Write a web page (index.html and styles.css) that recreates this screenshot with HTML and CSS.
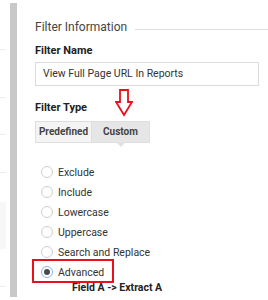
FILE: index.html
```html
<!DOCTYPE html>
<html>
<head>
<meta charset="utf-8">
<link rel="stylesheet" href="styles.css">
</head>
<body>
<div class="page">
  <div class="side">
    <div class="s1"></div>
    <div class="s2"></div>
    <div class="s3"></div>
    <div class="s4"></div>
    <div class="s5"></div>
    <div class="s6"></div>
    <div class="s7"></div>
  </div>
  <div class="bar"></div>
  <div class="main">
    <div class="legend"><span>Filter Information</span><div class="rule"></div></div>
    <div class="label name-label">Filter Name</div>
    <div class="input">View Full Page URL In Reports</div>
    <div class="label type-label">Filter Type</div>
    <div class="tabs">
      <div class="tab">Predefined</div>
      <div class="tab active">Custom</div>
    </div>
    <div class="radios">
      <div class="radio"><span class="dot"></span><span>Exclude</span></div>
      <div class="radio"><span class="dot"></span><span>Include</span></div>
      <div class="radio"><span class="dot"></span><span>Lowercase</span></div>
      <div class="radio"><span class="dot"></span><span>Uppercase</span></div>
      <div class="radio"><span class="dot"></span><span>Search and Replace</span></div>
      <div class="radio"><span class="dot checked"></span><span>Advanced</span></div>
    </div>
    <div class="sub">Field A -&gt; Extract A</div>
    <svg class="arrow" width="18" height="28" viewBox="0 0 18 28"><path d="M5,1 H13 V13 H17 L9,26 L1,13 H5 Z" fill="#fff" stroke="#e8101a" stroke-width="1.8" stroke-linejoin="miter"/></svg>
    <div class="highlight"></div>
  </div>
</div>
</body>
</html>
```
FILE: styles.css
```css
html, body { margin: 0; padding: 0; background: #fff; }
body { font-family: Roboto, "Liberation Sans", Arial, sans-serif; color: #333; }
.page { display: flex; width: 268px; height: 300px; overflow: hidden; }
.side { width: 6px; margin-right: 4px; display: flex; flex-direction: column; }
.side div { border-bottom: 1px solid #ececec; flex: none; }
.s1 { height: 49px; }
.s2 { height: 47px; }
.s3 { height: 36px; }
.s4 { height: 37px; }
.s5 { height: 29px; border-bottom: none !important; }
.s6 { height: 47px; background: #f6f7f8; border-bottom: none !important; }
.s7 { height: 37px; }
.bar { width: 7px; height: 294px; margin-top: 3px; background: #c8c8c8; flex: none; }
.main { position: relative; flex: 1; padding-left: 18px; padding-top: 20px; }
.legend { display: flex; align-items: center; height: 14px; font-size: 12px; line-height: 14px; color: #444; }
.legend .rule { flex: 1; height: 1px; background: #dedede; margin-left: 8px; margin-top: 5px; }
.label { font-size: 11px; font-weight: bold; line-height: 14px; color: #222; }
.name-label { margin-top: 10px; }
.input { margin-top: 4px; width: 224px; height: 24px; box-sizing: border-box; border: 1px solid #dcdcdc; font-size: 10.5px; line-height: 22px; padding-left: 7px; color: #333; }
.type-label { margin-top: 15px; }
.tabs { display: flex; margin-top: 6px; height: 22px; }
.tab { position: relative; box-sizing: border-box; height: 22px; border: 1px solid #dedede; background: #f4f4f4; font-size: 10px; font-weight: bold; line-height: 20px; color: #444; text-align: center; }
.tab:first-child { width: 57px; }
.tab.active { width: 58px; background: #e6e6e6; border-left: none; }
.tab.active::after { content: ""; position: absolute; left: 24px; top: 20px; border-left: 5px solid transparent; border-right: 5px solid transparent; border-top: 5px solid #e2e2e2; }
.radios { margin-top: 19px; }
.radio { display: flex; align-items: center; height: 20px; font-size: 10.5px; color: #333; }
.dot { box-sizing: border-box; width: 12px; height: 12px; border: 1px solid #cfcfcf; border-radius: 50%; margin-left: 6px; margin-right: 5px; display: flex; align-items: center; justify-content: center; }
.dot.checked { border-color: #8ab0f0; }
.dot.checked::after { content: ""; width: 6px; height: 6px; border-radius: 50%; background: #4a4a4a; }
.sub { padding-left: 37px; font-size: 10.5px; font-weight: bold; line-height: 12px; color: #222; }
.arrow { position: absolute; left: 98px; top: 89px; }
.highlight { position: absolute; left: 15px; top: 259px; width: 82px; height: 24px; box-sizing: border-box; border: 2px solid #e8101a; }
```
